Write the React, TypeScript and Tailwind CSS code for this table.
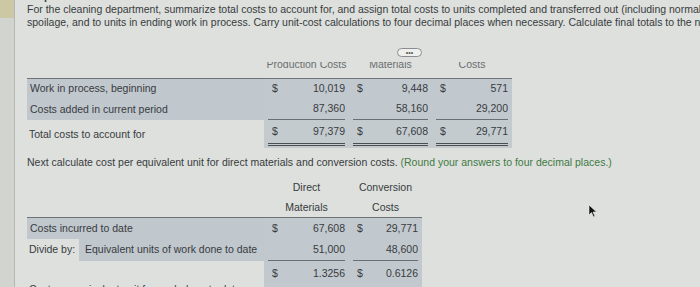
import React from 'react';

type Line = 'none' | 'single' | 'double';

function Cell({ w, dollar, value, line = 'none', shaded = true }: { w: string; dollar?: boolean; value: string; line?: Line; shaded?: boolean }) {
  const border =
    line === 'single'
      ? 'border-b border-[#6b6f72]'
      : line === 'double'
      ? 'border-b-[3px] border-double border-[#4a4e52]'
      : '';
  return (
    <div className={`${w} h-full px-[4px] flex ${shaded ? 'bg-[#c2c9ce]' : ''}`}>
      <div className={`flex-1 flex items-center justify-between pl-[4px] ${border}`}>
        <span>{dollar ? '$' : ''}</span>
        <span>{value}</span>
      </div>
    </div>
  );
}

export default function App() {
  return (
    <div className="w-[700px] h-[287px] overflow-hidden flex bg-[#dde0dc] text-[10.5px] text-[#383b3e] font-['Liberation_Sans',Arial,sans-serif] relative">
      {/* left edge of the window */}
      <div className="w-[15px] shrink-0 bg-[#d2d4d0] border-r border-[#b4b7b3] flex flex-col">
        <div className="h-[18px] bg-[#cdc8a4]" />
      </div>

      <div className="flex-1 pl-[12px] flex flex-col">
        <div className="leading-[13px] -mt-[10px] font-bold">Required:</div>
        <p className="leading-[13px] whitespace-nowrap">
          For the cleaning department, summarize total costs to account for, and assign total costs to units completed and transferred out (including normal
        </p>
        <p className="leading-[13px] whitespace-nowrap">
          spoilage, and to units in ending work in process. Carry unit-cost calculations to four decimal places when necessary. Calculate final totals to the nearest
        </p>

        <div className="relative -ml-[6px] mt-[23px] h-px bg-[#9ea2a0]">
          <div className="absolute left-[376px] -top-[4px] w-[25px] h-[9px] rounded-full border border-[#8a8e92] bg-[#eef0ee] flex items-center justify-center text-[7px] leading-none text-[#555]">
            •••
          </div>
        </div>

        {/* Production costs table */}
        <div className="mt-[10px] w-[485px] flex flex-col">
          <div className="h-[17px] overflow-hidden flex border-b border-[#6f7376] text-[#6a6e72]">
            <div className="w-[237px]" />
            <div className="w-[85px] text-center leading-[13px] -mt-[4px]">Production Costs</div>
            <div className="w-[83px] text-center leading-[13px] -mt-[4px]">Materials</div>
            <div className="w-[80px] text-center leading-[13px] -mt-[4px]">Costs</div>
          </div>
          <div className="h-[20px] flex bg-[#c0c7cd]">
            <div className="w-[237px] pl-[3px] flex items-center">Work in process, beginning</div>
            <Cell w="w-[85px]" dollar value="10,019" />
            <Cell w="w-[83px]" dollar value="9,448" />
            <Cell w="w-[80px]" dollar value="571" />
          </div>
          <div className="h-[21px] flex bg-[#c0c7cd]">
            <div className="w-[237px] pl-[3px] flex items-center">Costs added in current period</div>
            <Cell w="w-[85px]" value="87,360" line="single" />
            <Cell w="w-[83px]" value="58,160" line="single" />
            <Cell w="w-[80px]" value="29,200" line="single" />
          </div>
          <div className="h-[28px] flex">
            <div className="w-[237px] pl-[2px] flex items-center pt-[2px]">Total costs to account for</div>
            <div className="flex h-full pb-[2px] bg-[#c4cbcf]">
              <Cell w="w-[85px]" dollar value="97,379" line="double" shaded={false} />
              <Cell w="w-[83px]" dollar value="67,608" line="double" shaded={false} />
              <Cell w="w-[80px]" dollar value="29,771" line="double" shaded={false} />
            </div>
          </div>
        </div>

        <p className="mt-[8px] leading-[13px] whitespace-nowrap">
          Next calculate cost per equivalent unit for direct materials and conversion costs.{' '}
          <span className="text-[#3f7a45]">(Round your answers to four decimal places.)</span>
        </p>

        {/* Cost per equivalent unit table */}
        <div className="mt-[8px] w-[395px] flex flex-col">
          <div className="flex border-b border-[#6f7376]">
            <div className="w-[237px]" />
            <div className="w-[85px] flex flex-col items-center">
              <span className="leading-[20px]">Direct</span>
              <span className="leading-[20px]">Materials</span>
            </div>
            <div className="w-[73px] flex flex-col items-center">
              <span className="leading-[20px]">Conversion</span>
              <span className="leading-[20px]">Costs</span>
            </div>
          </div>
          <div className="h-[21px] flex bg-[#c0c7cd]">
            <div className="w-[237px] pl-[3px] flex items-center">Costs incurred to date</div>
            <Cell w="w-[85px]" dollar value="67,608" />
            <Cell w="w-[73px]" dollar value="29,771" />
          </div>
          <div className="h-[22px] flex">
            <div className="w-[52px] pl-[2px] flex items-center">Divide by:</div>
            <div className="w-[185px] pl-[6px] flex items-center bg-[#c0c7cd]">Equivalent units of work done to date</div>
            <Cell w="w-[85px]" value="51,000" line="single" />
            <Cell w="w-[73px]" value="48,600" line="single" />
          </div>
          <div className="h-[26px] flex">
            <div className="w-[237px] pl-[2px] flex items-end overflow-hidden">
              <span className="leading-[13px] -mb-[9px]">Cost per equivalent unit for work done to date</span>
            </div>
            <Cell w="w-[85px]" dollar value="1.3256" />
            <Cell w="w-[73px]" dollar value="0.6126" />
          </div>
        </div>
      </div>

      {/* mouse pointer */}
      <svg className="absolute left-[588px] top-[204px]" width="10" height="14" viewBox="0 0 10 14">
        <path d="M1 1 L1 11 L3.5 8.5 L5.5 13 L7 12.3 L5 8 L8.5 8 Z" fill="#111" stroke="#eee" strokeWidth="0.6" />
      </svg>
    </div>
  );
}
